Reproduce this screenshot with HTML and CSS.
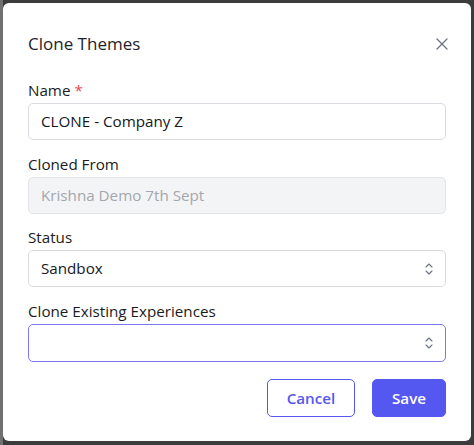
FILE: index.html
```html
<!DOCTYPE html>
<html lang="en">
<head>
<meta charset="utf-8">
<title>Clone Themes</title>
<link rel="stylesheet" href="styles.css">
</head>
<body>
<div class="backdrop">
  <div class="modal">
    <div class="modal-header">
      <h2 class="modal-title">Clone Themes</h2>
      <button class="close-btn" aria-label="Close">
        <svg width="12" height="12" viewBox="0 0 12 12"><path d="M1 1L11 11M11 1L1 11" stroke="#6b7280" stroke-width="1.3" fill="none" stroke-linecap="round"/></svg>
      </button>
    </div>
    <div class="field">
      <label class="label">Name <span class="req">*</span></label>
      <div class="input">CLONE - Company Z</div>
    </div>
    <div class="field">
      <label class="label">Cloned From</label>
      <div class="input disabled">Krishna Demo 7th Sept</div>
    </div>
    <div class="field">
      <label class="label">Status</label>
      <div class="input select">Sandbox
        <svg class="chev" width="10" height="14" viewBox="0 0 10 14"><path d="M2 5L5 2L8 5M2 9L5 12L8 9" stroke="#6b7280" stroke-width="1.1" fill="none" stroke-linecap="round" stroke-linejoin="round"/></svg>
      </div>
    </div>
    <div class="field">
      <label class="label">Clone Existing Experiences</label>
      <div class="input select focused">
        <svg class="chev" width="10" height="14" viewBox="0 0 10 14"><path d="M2 5L5 2L8 5M2 9L5 12L8 9" stroke="#6b7280" stroke-width="1.1" fill="none" stroke-linecap="round" stroke-linejoin="round"/></svg>
      </div>
    </div>
    <div class="actions">
      <button class="btn btn-outline">Cancel</button>
      <button class="btn btn-primary">Save</button>
    </div>
  </div>
</div>
</body>
</html>
```
FILE: styles.css
```css
html, body {
  margin: 0;
  padding: 0;
  background: #3c3c3c;
  font-family: "Open Sans", "Noto Sans", sans-serif;
}
.backdrop {
  width: 474px;
  height: 445px;
  box-sizing: border-box;
  padding: 3px 3px 4px 3px;
  background: linear-gradient(to right, #707070 0, #707070 3px, #3c3c3c 3px);
}
.modal {
  background: #fff;
  border-radius: 6px;
  height: 438px;
  box-sizing: border-box;
  padding: 29px 25px 0 25px;
}
.modal-header {
  display: flex;
  align-items: center;
  justify-content: space-between;
  height: 24px;
  margin-bottom: 24px;
}
.modal-title {
  margin: 0;
  font-size: 17px;
  font-weight: 400;
  color: #1f2328;
  line-height: 24px;
}
.close-btn {
  border: 0;
  background: none;
  padding: 0;
  margin-right: -2px;
  display: flex;
}
.field {
  margin-bottom: 13.5px;
}
.label {
  display: block;
  font-size: 15.2px;
  line-height: 20px;
  color: #1a1c20;
  margin-bottom: 3px;
}
.req {
  color: #e5484d;
}
.input {
  position: relative;
  height: 37px;
  box-sizing: border-box;
  border: 1px solid #d9dbe0;
  border-radius: 5px;
  padding: 0 12px;
  font-size: 15.2px;
  line-height: 35px;
  color: #16181d;
  background: #fff;
}
.input.disabled {
  background: #f3f4f6;
  color: #a3a7ae;
  border-color: #e2e4e8;
}
.input.focused {
  border-color: #7b78ec;
  height: 38px;
}
.chev {
  position: absolute;
  right: 11px;
  top: 50%;
  transform: translateY(-50%);
}
.actions {
  display: flex;
  justify-content: flex-end;
  gap: 17px;
  margin-top: 17px;
}
.btn {
  height: 38px;
  border-radius: 5px;
  font-family: "Open Sans", "Noto Sans", sans-serif;
  font-size: 15.2px;
  font-weight: 600;
  box-sizing: border-box;
  padding: 0;
}
.btn-outline {
  width: 88px;
  background: #fff;
  border: 1px solid #5457f0;
  color: #5457f0;
}
.btn-primary {
  width: 74px;
  background: #5457f0;
  border: 1px solid #5457f0;
  color: #fff;
}
```
